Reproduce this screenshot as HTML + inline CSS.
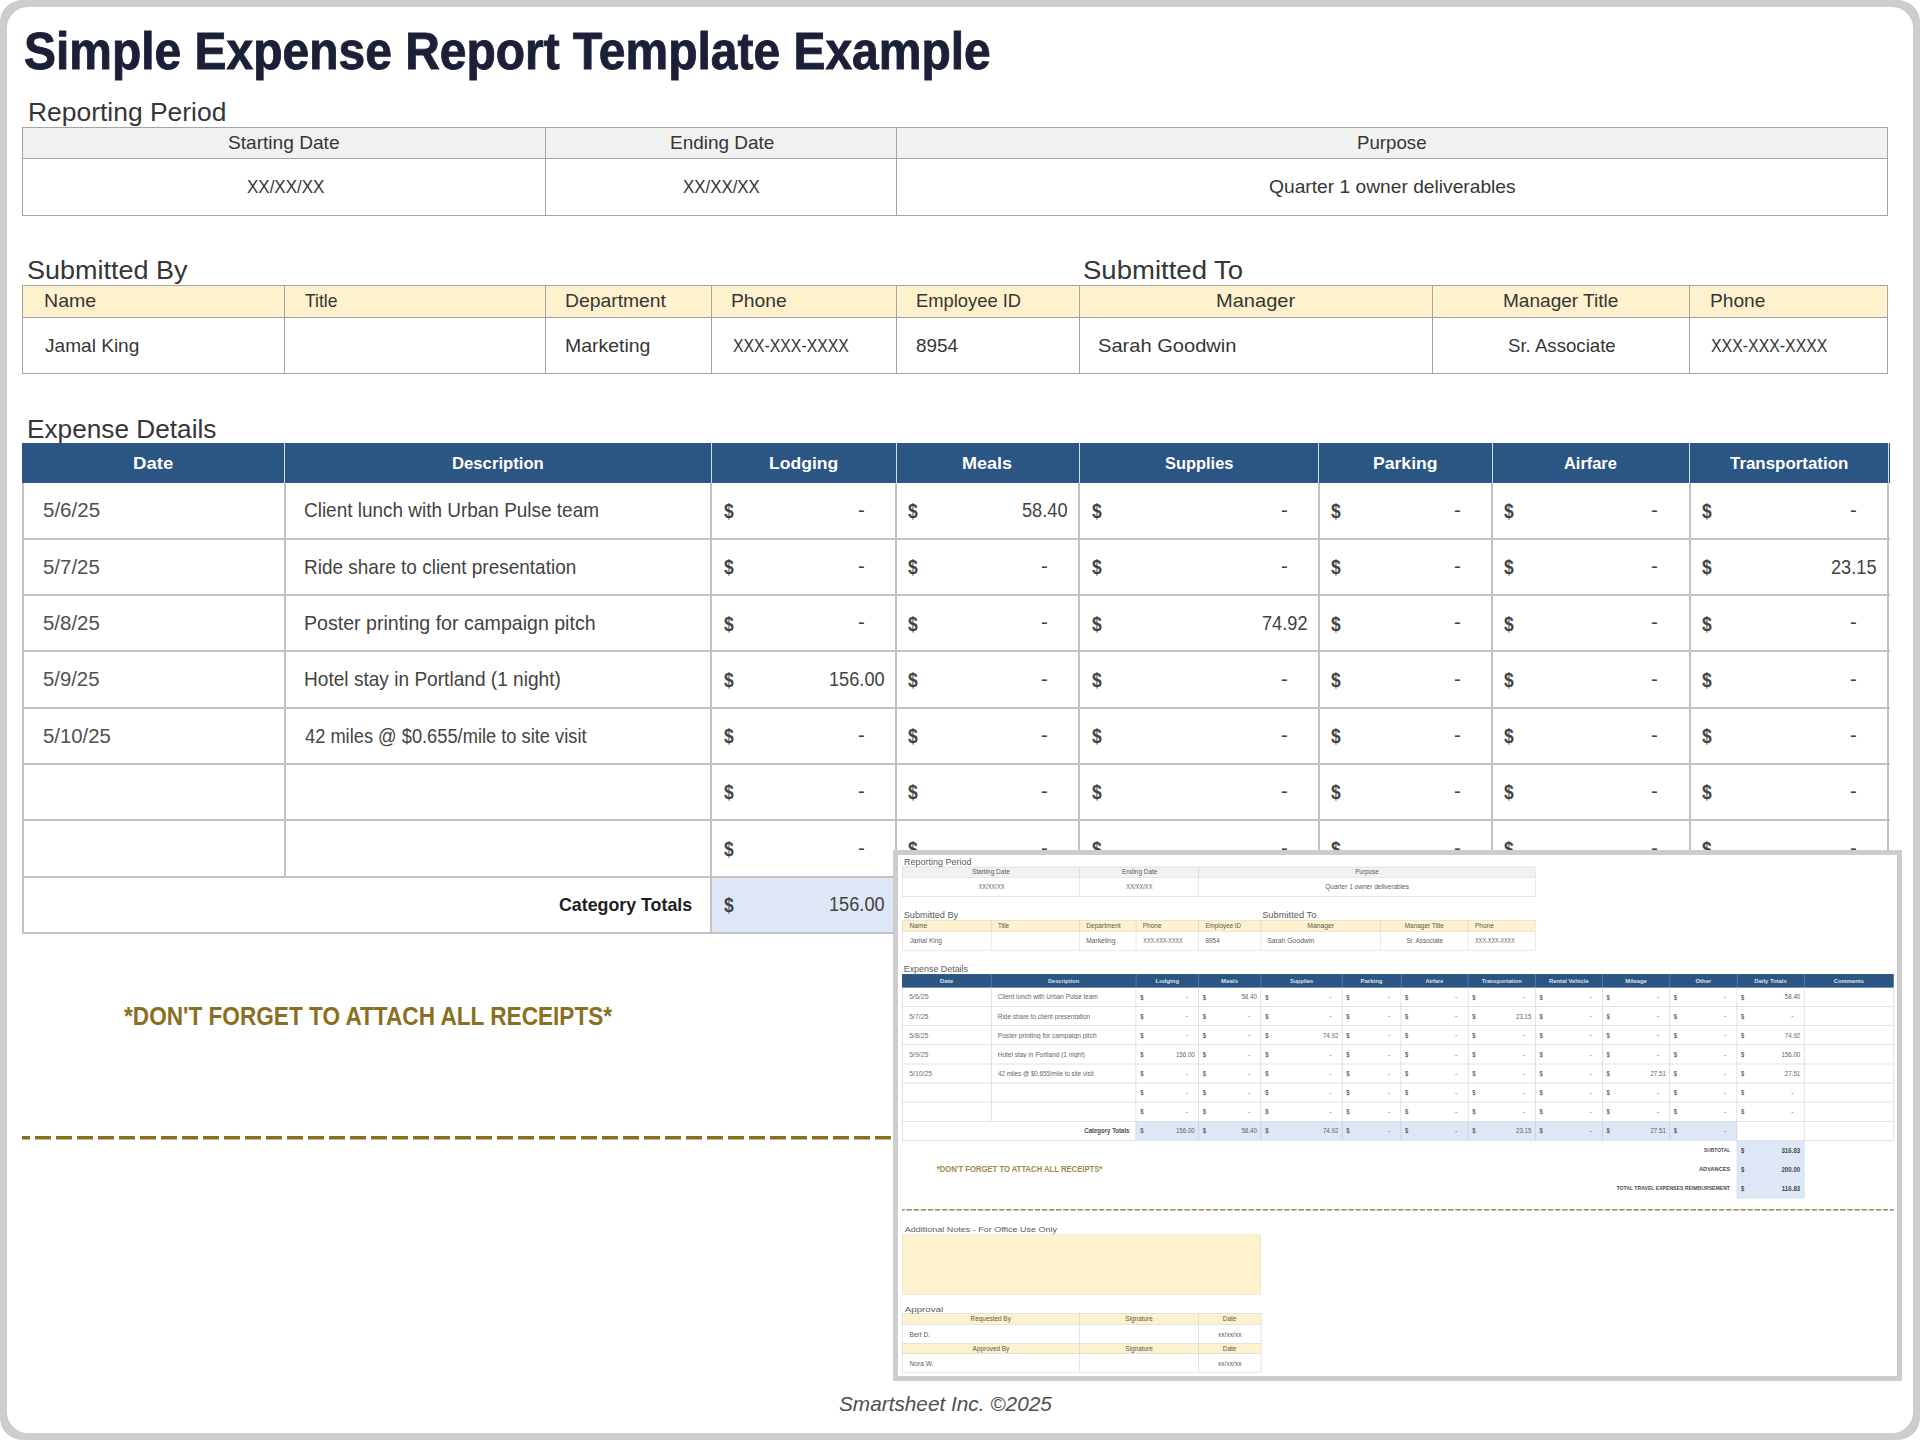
<!DOCTYPE html>
<html><head><meta charset="utf-8"><title>Simple Expense Report Template Example</title><style>
html,body{margin:0;padding:0;background:#fff;}
body{width:1920px;height:1440px;position:relative;overflow:hidden;font-family:"Liberation Sans",sans-serif;}
.frame{position:absolute;left:0;top:0;width:1920px;height:1440px;background:#cdcdcd;border-radius:22px;}
.frame2{position:absolute;left:7px;top:7px;width:1906px;height:1426px;background:#fff;border-radius:21px;}
.title{-webkit-text-stroke:0.9px #1b2038;}
.inset .t{opacity:.82;}
.inset .g{opacity:.7;}
.sheet{position:absolute;left:0;top:0;width:3000px;height:1700px;}
.sheet i{position:absolute;display:block;}
.t{position:absolute;white-space:pre;line-height:1;transform-origin:0 0;font-family:"Liberation Sans",sans-serif;}
.mainclip{position:absolute;left:0;top:0;width:1890px;height:1160px;overflow:hidden;}
.inset{position:absolute;left:893px;top:850px;width:1009px;height:531px;box-sizing:border-box;border:5px solid #cdcdcd;background:#fff;overflow:hidden;}
.inset .sheet{transform:translate(-3.44px,-31.3px) scale(0.3394);transform-origin:0 0;}
</style></head><body>
<div class="frame"></div><div class="frame2"></div>
<span class="t title" style="left:24.08px;top:25px;font-size:52.035px;font-weight:bold;color:#1b2038;transform:scaleX(0.9221);">Simple Expense Report Template Example</span><span class=t style="left:839.29px;top:1394px;font-size:20.640px;font-style:italic;color:#505050;transform:scaleX(1.0076);">Smartsheet Inc. ©2025</span>
<div class="mainclip"><div class="sheet"><i style='left:22px;top:127px;width:1865px;height:31px;background:#f1f1f1'></i><i class=g style='left:22px;top:127px;width:1866px;height:1px;background:#a4a4a4'></i><i class=g style='left:22px;top:158px;width:1866px;height:1px;background:#a4a4a4'></i><i class=g style='left:22px;top:215px;width:1866px;height:1px;background:#a4a4a4'></i><i class=g style='left:22px;top:127px;width:1px;height:89px;background:#a4a4a4'></i><i class=g style='left:545px;top:127px;width:1px;height:89px;background:#a4a4a4'></i><i class=g style='left:896px;top:127px;width:1px;height:89px;background:#a4a4a4'></i><i class=g style='left:1887px;top:127px;width:1px;height:89px;background:#a4a4a4'></i><i style='left:22px;top:285px;width:1865px;height:32px;background:#fef1cd'></i><i class=g style='left:22px;top:285px;width:1866px;height:1px;background:#a4a4a4'></i><i class=g style='left:22px;top:317px;width:1866px;height:1px;background:#a4a4a4'></i><i class=g style='left:22px;top:373px;width:1866px;height:1px;background:#a4a4a4'></i><i class=g style='left:22px;top:285px;width:1px;height:89px;background:#a4a4a4'></i><i class=g style='left:284px;top:285px;width:1px;height:89px;background:#a4a4a4'></i><i class=g style='left:545px;top:285px;width:1px;height:89px;background:#a4a4a4'></i><i class=g style='left:711px;top:285px;width:1px;height:89px;background:#a4a4a4'></i><i class=g style='left:896px;top:285px;width:1px;height:89px;background:#a4a4a4'></i><i class=g style='left:1079px;top:285px;width:1px;height:89px;background:#a4a4a4'></i><i class=g style='left:1432px;top:285px;width:1px;height:89px;background:#a4a4a4'></i><i class=g style='left:1689px;top:285px;width:1px;height:89px;background:#a4a4a4'></i><i class=g style='left:1887px;top:285px;width:1px;height:89px;background:#a4a4a4'></i><i style='left:22px;top:443px;width:1868px;height:40px;background:#2b5582'></i><i style='left:1890px;top:443px;width:1054px;height:40px;background:#2b5582'></i><i class=g style='left:284px;top:443px;width:1px;height:40px;background:#d5dde8'></i><i class=g style='left:711px;top:443px;width:1px;height:40px;background:#d5dde8'></i><i class=g style='left:896px;top:443px;width:1px;height:40px;background:#d5dde8'></i><i class=g style='left:1079px;top:443px;width:1px;height:40px;background:#d5dde8'></i><i class=g style='left:1318px;top:443px;width:1px;height:40px;background:#d5dde8'></i><i class=g style='left:1492px;top:443px;width:1px;height:40px;background:#d5dde8'></i><i class=g style='left:1689px;top:443px;width:1px;height:40px;background:#d5dde8'></i><i class=g style='left:1888px;top:443px;width:1px;height:40px;background:#d5dde8'></i><i class=g style='left:2086px;top:443px;width:1px;height:40px;background:#d5dde8'></i><i class=g style='left:2284px;top:443px;width:1px;height:40px;background:#d5dde8'></i><i class=g style='left:2482px;top:443px;width:1px;height:40px;background:#d5dde8'></i><i class=g style='left:2680px;top:443px;width:1px;height:40px;background:#d5dde8'></i><i style='left:711px;top:878px;width:1771px;height:54px;background:#dde7f5'></i><i class=g style='left:22px;top:538px;width:2922px;height:2px;background:#c2c2c2'></i><i class=g style='left:22px;top:594px;width:2922px;height:2px;background:#c2c2c2'></i><i class=g style='left:22px;top:650px;width:2922px;height:2px;background:#c2c2c2'></i><i class=g style='left:22px;top:707px;width:2922px;height:2px;background:#c2c2c2'></i><i class=g style='left:22px;top:763px;width:2922px;height:2px;background:#c2c2c2'></i><i class=g style='left:22px;top:819px;width:2922px;height:2px;background:#c2c2c2'></i><i class=g style='left:22px;top:876px;width:2922px;height:2px;background:#c2c2c2'></i><i class=g style='left:22px;top:932px;width:2922px;height:2px;background:#c2c2c2'></i><i class=g style='left:22px;top:483px;width:2px;height:451px;background:#c2c2c2'></i><i class=g style='left:284px;top:483px;width:2px;height:393px;background:#c2c2c2'></i><i class=g style='left:710px;top:483px;width:2px;height:451px;background:#c2c2c2'></i><i class=g style='left:895px;top:483px;width:2px;height:451px;background:#c2c2c2'></i><i class=g style='left:1078px;top:483px;width:2px;height:451px;background:#c2c2c2'></i><i class=g style='left:1318px;top:483px;width:2px;height:451px;background:#c2c2c2'></i><i class=g style='left:1491px;top:483px;width:2px;height:451px;background:#c2c2c2'></i><i class=g style='left:1689px;top:483px;width:2px;height:451px;background:#c2c2c2'></i><i class=g style='left:1887px;top:483px;width:2px;height:451px;background:#c2c2c2'></i><i class=g style='left:2085px;top:483px;width:2px;height:451px;background:#c2c2c2'></i><i class=g style='left:2283px;top:483px;width:2px;height:451px;background:#c2c2c2'></i><i class=g style='left:2481px;top:483px;width:2px;height:451px;background:#c2c2c2'></i><i class=g style='left:2679px;top:483px;width:2px;height:451px;background:#c2c2c2'></i><i class=g style='left:2943px;top:483px;width:2px;height:451px;background:#c2c2c2'></i><i style='left:2482px;top:934px;width:198px;height:56.3px;background:#dde7f5'></i><i class=g style='left:2482px;top:989px;width:198px;height:2px;background:#c9d5e6'></i><i style='left:2482px;top:990.3px;width:198px;height:56.3px;background:#dde7f5'></i><i class=g style='left:2482px;top:1046px;width:198px;height:2px;background:#c9d5e6'></i><i style='left:2482px;top:1046.6px;width:198px;height:56.3px;background:#dde7f5'></i><i class=g style='left:2482px;top:1102px;width:198px;height:2px;background:#c9d5e6'></i><i class=g style='left:2481px;top:934px;width:2px;height:169px;background:#c9d5e6'></i><i class=g style='left:2679px;top:934px;width:2px;height:169px;background:#c9d5e6'></i><i style='left:22px;top:1209.5px;width:1057.5px;height:177.3px;background:#fef1cd'></i><i class=g style='left:22px;top:1209px;width:1057.5px;height:2px;background:#e3dcc8'></i><i class=g style='left:22px;top:1386px;width:1057.5px;height:2px;background:#e3dcc8'></i><i class=g style='left:22px;top:1209.5px;width:2px;height:177.3px;background:#e3dcc8'></i><i class=g style='left:1078px;top:1209.5px;width:2px;height:177.3px;background:#e3dcc8'></i><i style='left:22px;top:1443.4px;width:1057.5px;height:31.6px;background:#fef1cd'></i><i style='left:22px;top:1531.8px;width:1057.5px;height:29.2px;background:#fef1cd'></i><i class=g style='left:22px;top:1442.4px;width:1057.5px;height:2px;background:#c8c8c8'></i><i class=g style='left:22px;top:1474px;width:1057.5px;height:2px;background:#c8c8c8'></i><i class=g style='left:22px;top:1530.8px;width:1057.5px;height:2px;background:#c8c8c8'></i><i class=g style='left:22px;top:1560px;width:1057.5px;height:2px;background:#c8c8c8'></i><i class=g style='left:22px;top:1614.5px;width:1057.5px;height:2px;background:#c8c8c8'></i><i class=g style='left:21px;top:1443.4px;width:2px;height:172.1px;background:#c8c8c8'></i><i class=g style='left:544.2px;top:1443.4px;width:2px;height:172.1px;background:#c8c8c8'></i><i class=g style='left:895px;top:1443.4px;width:2px;height:172.1px;background:#c8c8c8'></i><i class=g style='left:1078.5px;top:1443.4px;width:2px;height:172.1px;background:#c8c8c8'></i><span class=t style="left:27.63px;top:100px;font-size:25.581px;color:#363636;transform:scaleX(1.0333);">Reporting Period</span><span class=t style="left:26.95px;top:258px;font-size:25.581px;color:#363636;transform:scaleX(1.0550);">Submitted By</span><span class=t style="left:1082.72px;top:258px;font-size:25.581px;color:#363636;transform:scaleX(1.0762);">Submitted To</span><span class=t style="left:26.70px;top:417px;font-size:25.581px;color:#363636;transform:scaleX(1.0247);">Expense Details</span><span class=t style="left:29.60px;top:1186px;font-size:20.465px;color:#363636;transform:scaleX(1.2948);">Additional Notes - For Office Use Only</span><span class=t style="left:29.60px;top:1419px;font-size:23.535px;color:#363636;transform:scaleX(1.2174);">Approval</span><span class=t style="left:227.97px;top:134px;font-size:18.605px;color:#363636;transform:scaleX(1.0280);">Starting Date</span><span class=t style="left:669.68px;top:134px;font-size:18.605px;color:#363636;transform:scaleX(1.0198);">Ending Date</span><span class=t style="left:1356.65px;top:134px;font-size:18.605px;color:#363636;transform:scaleX(1.0044);">Purpose</span><span class=t style="left:247.00px;top:177px;font-size:19.186px;color:#363636;transform:scaleX(0.8851);">XX/XX/XX</span><span class=t style="left:682.75px;top:177px;font-size:19.186px;color:#363636;transform:scaleX(0.8793);">XX/XX/XX</span><span class=t style="left:1268.75px;top:177px;font-size:19.186px;color:#363636;transform:scaleX(1.0020);">Quarter 1 owner deliverables</span><span class=t style="left:43.75px;top:292px;font-size:18.605px;color:#363636;transform:scaleX(1.0521);">Name</span><span class=t style="left:305.10px;top:292px;font-size:18.605px;color:#363636;transform:scaleX(0.9412);">Title</span><span class=t style="left:565.16px;top:292px;font-size:18.605px;color:#363636;transform:scaleX(1.0396);">Department</span><span class=t style="left:731.46px;top:292px;font-size:18.605px;color:#363636;transform:scaleX(1.0365);">Phone</span><span class=t style="left:916.01px;top:292px;font-size:18.605px;color:#363636;transform:scaleX(0.9867);">Employee ID</span><span class=t style="left:1215.87px;top:292px;font-size:18.605px;color:#363636;transform:scaleX(1.0781);">Manager</span><span class=t style="left:1503.43px;top:292px;font-size:18.605px;color:#363636;transform:scaleX(1.0243);">Manager Title</span><span class=t style="left:1709.67px;top:292px;font-size:18.605px;color:#363636;transform:scaleX(1.0308);">Phone</span><span class=t style="left:44.80px;top:336px;font-size:19.186px;color:#363636;transform:scaleX(0.9947);">Jamal King</span><span class=t style="left:565.19px;top:336px;font-size:19.186px;color:#363636;transform:scaleX(1.0146);">Marketing</span><span class=t style="left:732.50px;top:336px;font-size:19.186px;color:#363636;transform:scaleX(0.8229);">XXX-XXX-XXXX</span><span class=t style="left:916.01px;top:336px;font-size:19.186px;color:#363636;transform:scaleX(0.9857);">8954</span><span class=t style="left:1098.35px;top:336px;font-size:19.186px;color:#363636;transform:scaleX(1.0477);">Sarah Goodwin</span><span class=t style="left:1507.78px;top:336px;font-size:19.186px;color:#363636;transform:scaleX(0.9716);">Sr. Associate</span><span class=t style="left:1710.70px;top:336px;font-size:19.186px;color:#363636;transform:scaleX(0.8279);">XXX-XXX-XXXX</span><span class=t style="left:133.01px;top:455px;font-size:17.006px;font-weight:bold;color:#ffffff;transform:scaleX(1.0917);">Date</span><span class=t style="left:451.97px;top:455px;font-size:17.006px;font-weight:bold;color:#ffffff;transform:scaleX(0.9815);">Description</span><span class=t style="left:769.17px;top:455px;font-size:17.006px;font-weight:bold;color:#ffffff;transform:scaleX(1.0323);">Lodging</span><span class=t style="left:962.34px;top:455px;font-size:17.006px;font-weight:bold;color:#ffffff;transform:scaleX(1.0587);">Meals</span><span class=t style="left:1164.95px;top:455px;font-size:17.006px;font-weight:bold;color:#ffffff;transform:scaleX(0.9662);">Supplies</span><span class=t style="left:1373.02px;top:455px;font-size:17.006px;font-weight:bold;color:#ffffff;transform:scaleX(1.0344);">Parking</span><span class=t style="left:1564.40px;top:455px;font-size:17.006px;font-weight:bold;color:#ffffff;transform:scaleX(0.9636);">Airfare</span><span class=t style="left:1730.15px;top:455px;font-size:17.006px;font-weight:bold;color:#ffffff;transform:scaleX(0.9941);">Transportation</span><span class=t style="left:1928.11px;top:455px;font-size:17.006px;font-weight:bold;color:#ffffff;transform:scaleX(1.0153);">Rental Vehicle</span><span class=t style="left:2153.02px;top:455px;font-size:17.006px;font-weight:bold;color:#ffffff;transform:scaleX(1.0153);">Mileage</span><span class=t style="left:2359.65px;top:455px;font-size:17.006px;font-weight:bold;color:#ffffff;transform:scaleX(1.0153);">Other</span><span class=t style="left:2532.77px;top:455px;font-size:17.006px;font-weight:bold;color:#ffffff;transform:scaleX(1.0153);">Daily Totals</span><span class=t style="left:2767.33px;top:455px;font-size:17.006px;font-weight:bold;color:#ffffff;transform:scaleX(1.0153);">Comments</span><span class=t style="left:43.38px;top:500px;font-size:20.058px;color:#505050;transform:scaleX(1.0241);">5/6/25</span><span class=t style="left:304.05px;top:500px;font-size:20.058px;color:#434343;transform:scaleX(0.9455);">Client lunch with Urban Pulse team</span><span class=t style="left:723.50px;top:501px;font-size:20.058px;font-weight:bold;color:#434343;transform:scaleX(0.8727);">$</span><span class=t style="left:857.88px;top:500px;font-size:20.058px;color:#434343;transform:scaleX(1.0200);">-</span><span class=t style="left:908.00px;top:501px;font-size:20.058px;font-weight:bold;color:#434343;transform:scaleX(0.8727);">$</span><span class=t style="left:1022.17px;top:500px;font-size:20.058px;color:#434343;transform:scaleX(0.9067);">58.40</span><span class=t style="left:1091.50px;top:501px;font-size:20.058px;font-weight:bold;color:#434343;transform:scaleX(0.8727);">$</span><span class=t style="left:1280.88px;top:500px;font-size:20.058px;color:#434343;transform:scaleX(1.0200);">-</span><span class=t style="left:1331.00px;top:501px;font-size:20.058px;font-weight:bold;color:#434343;transform:scaleX(0.8727);">$</span><span class=t style="left:1454.08px;top:500px;font-size:20.058px;color:#434343;transform:scaleX(1.0200);">-</span><span class=t style="left:1504.20px;top:501px;font-size:20.058px;font-weight:bold;color:#434343;transform:scaleX(0.8727);">$</span><span class=t style="left:1651.48px;top:500px;font-size:20.058px;color:#434343;transform:scaleX(1.0200);">-</span><span class=t style="left:1701.60px;top:501px;font-size:20.058px;font-weight:bold;color:#434343;transform:scaleX(0.8727);">$</span><span class=t style="left:1849.88px;top:500px;font-size:20.058px;color:#434343;transform:scaleX(1.0200);">-</span><span class=t style="left:1900.00px;top:501px;font-size:20.058px;font-weight:bold;color:#434343;transform:scaleX(0.8727);">$</span><span class=t style="left:2047.88px;top:500px;font-size:20.058px;color:#434343;transform:scaleX(1.0200);">-</span><span class=t style="left:2098.00px;top:501px;font-size:20.058px;font-weight:bold;color:#434343;transform:scaleX(0.8727);">$</span><span class=t style="left:2245.88px;top:500px;font-size:20.058px;color:#434343;transform:scaleX(1.0200);">-</span><span class=t style="left:2296.00px;top:501px;font-size:20.058px;font-weight:bold;color:#434343;transform:scaleX(0.8727);">$</span><span class=t style="left:2443.88px;top:500px;font-size:20.058px;color:#434343;transform:scaleX(1.0200);">-</span><span class=t style="left:2494.00px;top:501px;font-size:20.058px;font-weight:bold;color:#434343;transform:scaleX(0.8727);">$</span><span class=t style="left:2622.67px;top:500px;font-size:20.058px;color:#434343;transform:scaleX(0.9067);">58.40</span><span class=t style="left:43.38px;top:557px;font-size:20.058px;color:#505050;transform:scaleX(1.0185);">5/7/25</span><span class=t style="left:304.05px;top:557px;font-size:20.058px;color:#434343;transform:scaleX(0.9469);">Ride share to client presentation</span><span class=t style="left:723.50px;top:557px;font-size:20.058px;font-weight:bold;color:#434343;transform:scaleX(0.8727);">$</span><span class=t style="left:857.88px;top:556px;font-size:20.058px;color:#434343;transform:scaleX(1.0200);">-</span><span class=t style="left:908.00px;top:557px;font-size:20.058px;font-weight:bold;color:#434343;transform:scaleX(0.8727);">$</span><span class=t style="left:1041.38px;top:556px;font-size:20.058px;color:#434343;transform:scaleX(1.0200);">-</span><span class=t style="left:1091.50px;top:557px;font-size:20.058px;font-weight:bold;color:#434343;transform:scaleX(0.8727);">$</span><span class=t style="left:1280.88px;top:556px;font-size:20.058px;color:#434343;transform:scaleX(1.0200);">-</span><span class=t style="left:1331.00px;top:557px;font-size:20.058px;font-weight:bold;color:#434343;transform:scaleX(0.8727);">$</span><span class=t style="left:1454.08px;top:556px;font-size:20.058px;color:#434343;transform:scaleX(1.0200);">-</span><span class=t style="left:1504.20px;top:557px;font-size:20.058px;font-weight:bold;color:#434343;transform:scaleX(0.8727);">$</span><span class=t style="left:1651.48px;top:556px;font-size:20.058px;color:#434343;transform:scaleX(1.0200);">-</span><span class=t style="left:1701.60px;top:557px;font-size:20.058px;font-weight:bold;color:#434343;transform:scaleX(0.8727);">$</span><span class=t style="left:1830.67px;top:557px;font-size:20.058px;color:#434343;transform:scaleX(0.9067);">23.15</span><span class=t style="left:1900.00px;top:557px;font-size:20.058px;font-weight:bold;color:#434343;transform:scaleX(0.8727);">$</span><span class=t style="left:2047.88px;top:556px;font-size:20.058px;color:#434343;transform:scaleX(1.0200);">-</span><span class=t style="left:2098.00px;top:557px;font-size:20.058px;font-weight:bold;color:#434343;transform:scaleX(0.8727);">$</span><span class=t style="left:2245.88px;top:556px;font-size:20.058px;color:#434343;transform:scaleX(1.0200);">-</span><span class=t style="left:2296.00px;top:557px;font-size:20.058px;font-weight:bold;color:#434343;transform:scaleX(0.8727);">$</span><span class=t style="left:2443.88px;top:556px;font-size:20.058px;color:#434343;transform:scaleX(1.0200);">-</span><span class=t style="left:2494.00px;top:557px;font-size:20.058px;font-weight:bold;color:#434343;transform:scaleX(0.8727);">$</span><span class=t style="left:2641.88px;top:556px;font-size:20.058px;color:#434343;transform:scaleX(1.0200);">-</span><span class=t style="left:43.38px;top:613px;font-size:20.058px;color:#505050;transform:scaleX(1.0185);">5/8/25</span><span class=t style="left:304.02px;top:613px;font-size:20.058px;color:#434343;transform:scaleX(0.9764);">Poster printing for campaign pitch</span><span class=t style="left:723.50px;top:614px;font-size:20.058px;font-weight:bold;color:#434343;transform:scaleX(0.8727);">$</span><span class=t style="left:857.88px;top:612px;font-size:20.058px;color:#434343;transform:scaleX(1.0200);">-</span><span class=t style="left:908.00px;top:614px;font-size:20.058px;font-weight:bold;color:#434343;transform:scaleX(0.8727);">$</span><span class=t style="left:1041.38px;top:612px;font-size:20.058px;color:#434343;transform:scaleX(1.0200);">-</span><span class=t style="left:1091.50px;top:614px;font-size:20.058px;font-weight:bold;color:#434343;transform:scaleX(0.8727);">$</span><span class=t style="left:1261.67px;top:613px;font-size:20.058px;color:#434343;transform:scaleX(0.9067);">74.92</span><span class=t style="left:1331.00px;top:614px;font-size:20.058px;font-weight:bold;color:#434343;transform:scaleX(0.8727);">$</span><span class=t style="left:1454.08px;top:612px;font-size:20.058px;color:#434343;transform:scaleX(1.0200);">-</span><span class=t style="left:1504.20px;top:614px;font-size:20.058px;font-weight:bold;color:#434343;transform:scaleX(0.8727);">$</span><span class=t style="left:1651.48px;top:612px;font-size:20.058px;color:#434343;transform:scaleX(1.0200);">-</span><span class=t style="left:1701.60px;top:614px;font-size:20.058px;font-weight:bold;color:#434343;transform:scaleX(0.8727);">$</span><span class=t style="left:1849.88px;top:612px;font-size:20.058px;color:#434343;transform:scaleX(1.0200);">-</span><span class=t style="left:1900.00px;top:614px;font-size:20.058px;font-weight:bold;color:#434343;transform:scaleX(0.8727);">$</span><span class=t style="left:2047.88px;top:612px;font-size:20.058px;color:#434343;transform:scaleX(1.0200);">-</span><span class=t style="left:2098.00px;top:614px;font-size:20.058px;font-weight:bold;color:#434343;transform:scaleX(0.8727);">$</span><span class=t style="left:2245.88px;top:612px;font-size:20.058px;color:#434343;transform:scaleX(1.0200);">-</span><span class=t style="left:2296.00px;top:614px;font-size:20.058px;font-weight:bold;color:#434343;transform:scaleX(0.8727);">$</span><span class=t style="left:2443.88px;top:612px;font-size:20.058px;color:#434343;transform:scaleX(1.0200);">-</span><span class=t style="left:2494.00px;top:614px;font-size:20.058px;font-weight:bold;color:#434343;transform:scaleX(0.8727);">$</span><span class=t style="left:2622.67px;top:613px;font-size:20.058px;color:#434343;transform:scaleX(0.9067);">74.92</span><span class=t style="left:43.39px;top:669px;font-size:20.058px;color:#505050;transform:scaleX(1.0130);">5/9/25</span><span class=t style="left:304.05px;top:669px;font-size:20.058px;color:#434343;transform:scaleX(0.9526);">Hotel stay in Portland (1 night)</span><span class=t style="left:723.50px;top:670px;font-size:20.058px;font-weight:bold;color:#434343;transform:scaleX(0.8727);">$</span><span class=t style="left:828.69px;top:669px;font-size:20.058px;color:#434343;transform:scaleX(0.9067);">156.00</span><span class=t style="left:908.00px;top:670px;font-size:20.058px;font-weight:bold;color:#434343;transform:scaleX(0.8727);">$</span><span class=t style="left:1041.38px;top:669px;font-size:20.058px;color:#434343;transform:scaleX(1.0200);">-</span><span class=t style="left:1091.50px;top:670px;font-size:20.058px;font-weight:bold;color:#434343;transform:scaleX(0.8727);">$</span><span class=t style="left:1280.88px;top:669px;font-size:20.058px;color:#434343;transform:scaleX(1.0200);">-</span><span class=t style="left:1331.00px;top:670px;font-size:20.058px;font-weight:bold;color:#434343;transform:scaleX(0.8727);">$</span><span class=t style="left:1454.08px;top:669px;font-size:20.058px;color:#434343;transform:scaleX(1.0200);">-</span><span class=t style="left:1504.20px;top:670px;font-size:20.058px;font-weight:bold;color:#434343;transform:scaleX(0.8727);">$</span><span class=t style="left:1651.48px;top:669px;font-size:20.058px;color:#434343;transform:scaleX(1.0200);">-</span><span class=t style="left:1701.60px;top:670px;font-size:20.058px;font-weight:bold;color:#434343;transform:scaleX(0.8727);">$</span><span class=t style="left:1849.88px;top:669px;font-size:20.058px;color:#434343;transform:scaleX(1.0200);">-</span><span class=t style="left:1900.00px;top:670px;font-size:20.058px;font-weight:bold;color:#434343;transform:scaleX(0.8727);">$</span><span class=t style="left:2047.88px;top:669px;font-size:20.058px;color:#434343;transform:scaleX(1.0200);">-</span><span class=t style="left:2098.00px;top:670px;font-size:20.058px;font-weight:bold;color:#434343;transform:scaleX(0.8727);">$</span><span class=t style="left:2245.88px;top:669px;font-size:20.058px;color:#434343;transform:scaleX(1.0200);">-</span><span class=t style="left:2296.00px;top:670px;font-size:20.058px;font-weight:bold;color:#434343;transform:scaleX(0.8727);">$</span><span class=t style="left:2443.88px;top:669px;font-size:20.058px;color:#434343;transform:scaleX(1.0200);">-</span><span class=t style="left:2494.00px;top:670px;font-size:20.058px;font-weight:bold;color:#434343;transform:scaleX(0.8727);">$</span><span class=t style="left:2612.69px;top:669px;font-size:20.058px;color:#434343;transform:scaleX(0.9067);">156.00</span><span class=t style="left:43.39px;top:726px;font-size:20.058px;color:#505050;transform:scaleX(1.0123);">5/10/25</span><span class=t style="left:305.00px;top:726px;font-size:20.058px;color:#434343;transform:scaleX(0.9113);">42 miles @ $0.655/mile to site visit</span><span class=t style="left:723.50px;top:726px;font-size:20.058px;font-weight:bold;color:#434343;transform:scaleX(0.8727);">$</span><span class=t style="left:857.88px;top:725px;font-size:20.058px;color:#434343;transform:scaleX(1.0200);">-</span><span class=t style="left:908.00px;top:726px;font-size:20.058px;font-weight:bold;color:#434343;transform:scaleX(0.8727);">$</span><span class=t style="left:1041.38px;top:725px;font-size:20.058px;color:#434343;transform:scaleX(1.0200);">-</span><span class=t style="left:1091.50px;top:726px;font-size:20.058px;font-weight:bold;color:#434343;transform:scaleX(0.8727);">$</span><span class=t style="left:1280.88px;top:725px;font-size:20.058px;color:#434343;transform:scaleX(1.0200);">-</span><span class=t style="left:1331.00px;top:726px;font-size:20.058px;font-weight:bold;color:#434343;transform:scaleX(0.8727);">$</span><span class=t style="left:1454.08px;top:725px;font-size:20.058px;color:#434343;transform:scaleX(1.0200);">-</span><span class=t style="left:1504.20px;top:726px;font-size:20.058px;font-weight:bold;color:#434343;transform:scaleX(0.8727);">$</span><span class=t style="left:1651.48px;top:725px;font-size:20.058px;color:#434343;transform:scaleX(1.0200);">-</span><span class=t style="left:1701.60px;top:726px;font-size:20.058px;font-weight:bold;color:#434343;transform:scaleX(0.8727);">$</span><span class=t style="left:1849.88px;top:725px;font-size:20.058px;color:#434343;transform:scaleX(1.0200);">-</span><span class=t style="left:1900.00px;top:726px;font-size:20.058px;font-weight:bold;color:#434343;transform:scaleX(0.8727);">$</span><span class=t style="left:2047.88px;top:725px;font-size:20.058px;color:#434343;transform:scaleX(1.0200);">-</span><span class=t style="left:2098.00px;top:726px;font-size:20.058px;font-weight:bold;color:#434343;transform:scaleX(0.8727);">$</span><span class=t style="left:2226.67px;top:726px;font-size:20.058px;color:#434343;transform:scaleX(0.9067);">27.51</span><span class=t style="left:2296.00px;top:726px;font-size:20.058px;font-weight:bold;color:#434343;transform:scaleX(0.8727);">$</span><span class=t style="left:2443.88px;top:725px;font-size:20.058px;color:#434343;transform:scaleX(1.0200);">-</span><span class=t style="left:2494.00px;top:726px;font-size:20.058px;font-weight:bold;color:#434343;transform:scaleX(0.8727);">$</span><span class=t style="left:2622.67px;top:726px;font-size:20.058px;color:#434343;transform:scaleX(0.9067);">27.51</span><span class=t style="left:723.50px;top:782px;font-size:20.058px;font-weight:bold;color:#434343;transform:scaleX(0.8727);">$</span><span class=t style="left:857.88px;top:781px;font-size:20.058px;color:#434343;transform:scaleX(1.0200);">-</span><span class=t style="left:908.00px;top:782px;font-size:20.058px;font-weight:bold;color:#434343;transform:scaleX(0.8727);">$</span><span class=t style="left:1041.38px;top:781px;font-size:20.058px;color:#434343;transform:scaleX(1.0200);">-</span><span class=t style="left:1091.50px;top:782px;font-size:20.058px;font-weight:bold;color:#434343;transform:scaleX(0.8727);">$</span><span class=t style="left:1280.88px;top:781px;font-size:20.058px;color:#434343;transform:scaleX(1.0200);">-</span><span class=t style="left:1331.00px;top:782px;font-size:20.058px;font-weight:bold;color:#434343;transform:scaleX(0.8727);">$</span><span class=t style="left:1454.08px;top:781px;font-size:20.058px;color:#434343;transform:scaleX(1.0200);">-</span><span class=t style="left:1504.20px;top:782px;font-size:20.058px;font-weight:bold;color:#434343;transform:scaleX(0.8727);">$</span><span class=t style="left:1651.48px;top:781px;font-size:20.058px;color:#434343;transform:scaleX(1.0200);">-</span><span class=t style="left:1701.60px;top:782px;font-size:20.058px;font-weight:bold;color:#434343;transform:scaleX(0.8727);">$</span><span class=t style="left:1849.88px;top:781px;font-size:20.058px;color:#434343;transform:scaleX(1.0200);">-</span><span class=t style="left:1900.00px;top:782px;font-size:20.058px;font-weight:bold;color:#434343;transform:scaleX(0.8727);">$</span><span class=t style="left:2047.88px;top:781px;font-size:20.058px;color:#434343;transform:scaleX(1.0200);">-</span><span class=t style="left:2098.00px;top:782px;font-size:20.058px;font-weight:bold;color:#434343;transform:scaleX(0.8727);">$</span><span class=t style="left:2245.88px;top:781px;font-size:20.058px;color:#434343;transform:scaleX(1.0200);">-</span><span class=t style="left:2296.00px;top:782px;font-size:20.058px;font-weight:bold;color:#434343;transform:scaleX(0.8727);">$</span><span class=t style="left:2443.88px;top:781px;font-size:20.058px;color:#434343;transform:scaleX(1.0200);">-</span><span class=t style="left:2494.00px;top:782px;font-size:20.058px;font-weight:bold;color:#434343;transform:scaleX(0.8727);">$</span><span class=t style="left:2641.88px;top:781px;font-size:20.058px;color:#434343;transform:scaleX(1.0200);">-</span><span class=t style="left:723.50px;top:839px;font-size:20.058px;font-weight:bold;color:#434343;transform:scaleX(0.8727);">$</span><span class=t style="left:857.88px;top:838px;font-size:20.058px;color:#434343;transform:scaleX(1.0200);">-</span><span class=t style="left:908.00px;top:839px;font-size:20.058px;font-weight:bold;color:#434343;transform:scaleX(0.8727);">$</span><span class=t style="left:1041.38px;top:838px;font-size:20.058px;color:#434343;transform:scaleX(1.0200);">-</span><span class=t style="left:1091.50px;top:839px;font-size:20.058px;font-weight:bold;color:#434343;transform:scaleX(0.8727);">$</span><span class=t style="left:1280.88px;top:838px;font-size:20.058px;color:#434343;transform:scaleX(1.0200);">-</span><span class=t style="left:1331.00px;top:839px;font-size:20.058px;font-weight:bold;color:#434343;transform:scaleX(0.8727);">$</span><span class=t style="left:1454.08px;top:838px;font-size:20.058px;color:#434343;transform:scaleX(1.0200);">-</span><span class=t style="left:1504.20px;top:839px;font-size:20.058px;font-weight:bold;color:#434343;transform:scaleX(0.8727);">$</span><span class=t style="left:1651.48px;top:838px;font-size:20.058px;color:#434343;transform:scaleX(1.0200);">-</span><span class=t style="left:1701.60px;top:839px;font-size:20.058px;font-weight:bold;color:#434343;transform:scaleX(0.8727);">$</span><span class=t style="left:1849.88px;top:838px;font-size:20.058px;color:#434343;transform:scaleX(1.0200);">-</span><span class=t style="left:1900.00px;top:839px;font-size:20.058px;font-weight:bold;color:#434343;transform:scaleX(0.8727);">$</span><span class=t style="left:2047.88px;top:838px;font-size:20.058px;color:#434343;transform:scaleX(1.0200);">-</span><span class=t style="left:2098.00px;top:839px;font-size:20.058px;font-weight:bold;color:#434343;transform:scaleX(0.8727);">$</span><span class=t style="left:2245.88px;top:838px;font-size:20.058px;color:#434343;transform:scaleX(1.0200);">-</span><span class=t style="left:2296.00px;top:839px;font-size:20.058px;font-weight:bold;color:#434343;transform:scaleX(0.8727);">$</span><span class=t style="left:2443.88px;top:838px;font-size:20.058px;color:#434343;transform:scaleX(1.0200);">-</span><span class=t style="left:2494.00px;top:839px;font-size:20.058px;font-weight:bold;color:#434343;transform:scaleX(0.8727);">$</span><span class=t style="left:2641.88px;top:838px;font-size:20.058px;color:#434343;transform:scaleX(1.0200);">-</span><span class=t style="left:558.50px;top:896px;font-size:18.605px;font-weight:bold;color:#1e1e1e;transform:scaleX(0.9568);">Category Totals</span><span class=t style="left:723.50px;top:895px;font-size:20.058px;font-weight:bold;color:#434343;transform:scaleX(0.8727);">$</span><span class=t style="left:828.69px;top:894px;font-size:20.058px;color:#434343;transform:scaleX(0.9067);">156.00</span><span class=t style="left:908.00px;top:895px;font-size:20.058px;font-weight:bold;color:#434343;transform:scaleX(0.8727);">$</span><span class=t style="left:1022.17px;top:894px;font-size:20.058px;color:#434343;transform:scaleX(0.9067);">58.40</span><span class=t style="left:1091.50px;top:895px;font-size:20.058px;font-weight:bold;color:#434343;transform:scaleX(0.8727);">$</span><span class=t style="left:1261.67px;top:894px;font-size:20.058px;color:#434343;transform:scaleX(0.9067);">74.92</span><span class=t style="left:1331.00px;top:895px;font-size:20.058px;font-weight:bold;color:#434343;transform:scaleX(0.8727);">$</span><span class=t style="left:1454.08px;top:894px;font-size:20.058px;color:#434343;transform:scaleX(1.0200);">-</span><span class=t style="left:1504.20px;top:895px;font-size:20.058px;font-weight:bold;color:#434343;transform:scaleX(0.8727);">$</span><span class=t style="left:1651.48px;top:894px;font-size:20.058px;color:#434343;transform:scaleX(1.0200);">-</span><span class=t style="left:1701.60px;top:895px;font-size:20.058px;font-weight:bold;color:#434343;transform:scaleX(0.8727);">$</span><span class=t style="left:1830.67px;top:894px;font-size:20.058px;color:#434343;transform:scaleX(0.9067);">23.15</span><span class=t style="left:1900.00px;top:895px;font-size:20.058px;font-weight:bold;color:#434343;transform:scaleX(0.8727);">$</span><span class=t style="left:2047.88px;top:894px;font-size:20.058px;color:#434343;transform:scaleX(1.0200);">-</span><span class=t style="left:2098.00px;top:895px;font-size:20.058px;font-weight:bold;color:#434343;transform:scaleX(0.8727);">$</span><span class=t style="left:2226.67px;top:894px;font-size:20.058px;color:#434343;transform:scaleX(0.9067);">27.51</span><span class=t style="left:2296.00px;top:895px;font-size:20.058px;font-weight:bold;color:#434343;transform:scaleX(0.8727);">$</span><span class=t style="left:2443.88px;top:894px;font-size:20.058px;color:#434343;transform:scaleX(1.0200);">-</span><span class=t style="left:2384.70px;top:954px;font-size:15.262px;font-weight:bold;color:#1e1e1e;transform:scaleX(0.9427);">SUBTOTAL</span><span class=t style="left:2494.00px;top:952px;font-size:20.058px;font-weight:bold;color:#1e1e1e;transform:scaleX(0.8727);">$</span><span class=t style="left:2612.69px;top:952px;font-size:20.058px;font-weight:bold;color:#1e1e1e;transform:scaleX(0.9067);">316.83</span><span class=t style="left:2370.00px;top:1011px;font-size:15.262px;font-weight:bold;color:#1e1e1e;transform:scaleX(1.0952);">ADVANCES</span><span class=t style="left:2494.00px;top:1008px;font-size:20.058px;font-weight:bold;color:#1e1e1e;transform:scaleX(0.8727);">$</span><span class=t style="left:2612.69px;top:1008px;font-size:20.058px;font-weight:bold;color:#1e1e1e;transform:scaleX(0.9067);">200.00</span><span class=t style="left:2127.00px;top:1067px;font-size:15.262px;font-weight:bold;color:#1e1e1e;transform:scaleX(0.9882);">TOTAL TRAVEL EXPENSES REIMBURSEMENT</span><span class=t style="left:2494.00px;top:1065px;font-size:20.058px;font-weight:bold;color:#1e1e1e;transform:scaleX(0.8727);">$</span><span class=t style="left:2613.60px;top:1064px;font-size:20.058px;font-weight:bold;color:#1e1e1e;transform:scaleX(0.9067);">116.83</span><span class=t style="left:123.50px;top:1004px;font-size:25.581px;font-weight:bold;color:#8a6f22;transform:scaleX(0.8839);">*DON'T FORGET TO ATTACH ALL RECEIPTS*</span><span class=t style="left:224.10px;top:1450px;font-size:18.605px;color:#363636;transform:scaleX(1.0153);">Requested By</span><span class=t style="left:679.99px;top:1450px;font-size:18.605px;color:#363636;transform:scaleX(1.0153);">Signature</span><span class=t style="left:967.39px;top:1450px;font-size:18.605px;color:#363636;transform:scaleX(1.0153);">Date</span><span class=t style="left:43.78px;top:1495px;font-size:19.186px;color:#363636;transform:scaleX(1.0153);">Bert D.</span><span class=t style="left:953.18px;top:1495px;font-size:19.186px;color:#363636;transform:scaleX(1.0153);">xx/xx/xx</span><span class=t style="left:229.68px;top:1539px;font-size:18.605px;color:#363636;transform:scaleX(1.0153);">Approved By</span><span class=t style="left:679.99px;top:1539px;font-size:18.605px;color:#363636;transform:scaleX(1.0153);">Signature</span><span class=t style="left:967.39px;top:1539px;font-size:18.605px;color:#363636;transform:scaleX(1.0153);">Date</span><span class=t style="left:43.78px;top:1581px;font-size:19.186px;color:#363636;transform:scaleX(1.0153);">Nora W.</span><span class=t style="left:953.18px;top:1581px;font-size:19.186px;color:#363636;transform:scaleX(1.0153);">xx/xx/xx</span><svg style='position:absolute;left:0;top:0' width='2950' height='1200'><line x1='22' y1='1137.8' x2='2944' y2='1137.8' stroke='#8a6f22' stroke-width='3.6' stroke-dasharray='16 5' stroke-dashoffset='8'/></svg></div></div>
<div class="inset"><div class="sheet"><i style='left:22px;top:127px;width:1865px;height:31px;background:#f1f1f1'></i><i class=g style='left:22px;top:127px;width:1866px;height:1px;background:#a4a4a4'></i><i class=g style='left:22px;top:158px;width:1866px;height:1px;background:#a4a4a4'></i><i class=g style='left:22px;top:215px;width:1866px;height:1px;background:#a4a4a4'></i><i class=g style='left:22px;top:127px;width:1px;height:89px;background:#a4a4a4'></i><i class=g style='left:545px;top:127px;width:1px;height:89px;background:#a4a4a4'></i><i class=g style='left:896px;top:127px;width:1px;height:89px;background:#a4a4a4'></i><i class=g style='left:1887px;top:127px;width:1px;height:89px;background:#a4a4a4'></i><i style='left:22px;top:285px;width:1865px;height:32px;background:#fef1cd'></i><i class=g style='left:22px;top:285px;width:1866px;height:1px;background:#a4a4a4'></i><i class=g style='left:22px;top:317px;width:1866px;height:1px;background:#a4a4a4'></i><i class=g style='left:22px;top:373px;width:1866px;height:1px;background:#a4a4a4'></i><i class=g style='left:22px;top:285px;width:1px;height:89px;background:#a4a4a4'></i><i class=g style='left:284px;top:285px;width:1px;height:89px;background:#a4a4a4'></i><i class=g style='left:545px;top:285px;width:1px;height:89px;background:#a4a4a4'></i><i class=g style='left:711px;top:285px;width:1px;height:89px;background:#a4a4a4'></i><i class=g style='left:896px;top:285px;width:1px;height:89px;background:#a4a4a4'></i><i class=g style='left:1079px;top:285px;width:1px;height:89px;background:#a4a4a4'></i><i class=g style='left:1432px;top:285px;width:1px;height:89px;background:#a4a4a4'></i><i class=g style='left:1689px;top:285px;width:1px;height:89px;background:#a4a4a4'></i><i class=g style='left:1887px;top:285px;width:1px;height:89px;background:#a4a4a4'></i><i style='left:22px;top:443px;width:1868px;height:40px;background:#2b5582'></i><i style='left:1890px;top:443px;width:1054px;height:40px;background:#2b5582'></i><i class=g style='left:284px;top:443px;width:1px;height:40px;background:#d5dde8'></i><i class=g style='left:711px;top:443px;width:1px;height:40px;background:#d5dde8'></i><i class=g style='left:896px;top:443px;width:1px;height:40px;background:#d5dde8'></i><i class=g style='left:1079px;top:443px;width:1px;height:40px;background:#d5dde8'></i><i class=g style='left:1318px;top:443px;width:1px;height:40px;background:#d5dde8'></i><i class=g style='left:1492px;top:443px;width:1px;height:40px;background:#d5dde8'></i><i class=g style='left:1689px;top:443px;width:1px;height:40px;background:#d5dde8'></i><i class=g style='left:1888px;top:443px;width:1px;height:40px;background:#d5dde8'></i><i class=g style='left:2086px;top:443px;width:1px;height:40px;background:#d5dde8'></i><i class=g style='left:2284px;top:443px;width:1px;height:40px;background:#d5dde8'></i><i class=g style='left:2482px;top:443px;width:1px;height:40px;background:#d5dde8'></i><i class=g style='left:2680px;top:443px;width:1px;height:40px;background:#d5dde8'></i><i style='left:711px;top:878px;width:1771px;height:54px;background:#dde7f5'></i><i class=g style='left:22px;top:538px;width:2922px;height:2px;background:#c2c2c2'></i><i class=g style='left:22px;top:594px;width:2922px;height:2px;background:#c2c2c2'></i><i class=g style='left:22px;top:650px;width:2922px;height:2px;background:#c2c2c2'></i><i class=g style='left:22px;top:707px;width:2922px;height:2px;background:#c2c2c2'></i><i class=g style='left:22px;top:763px;width:2922px;height:2px;background:#c2c2c2'></i><i class=g style='left:22px;top:819px;width:2922px;height:2px;background:#c2c2c2'></i><i class=g style='left:22px;top:876px;width:2922px;height:2px;background:#c2c2c2'></i><i class=g style='left:22px;top:932px;width:2922px;height:2px;background:#c2c2c2'></i><i class=g style='left:22px;top:483px;width:2px;height:451px;background:#c2c2c2'></i><i class=g style='left:284px;top:483px;width:2px;height:393px;background:#c2c2c2'></i><i class=g style='left:710px;top:483px;width:2px;height:451px;background:#c2c2c2'></i><i class=g style='left:895px;top:483px;width:2px;height:451px;background:#c2c2c2'></i><i class=g style='left:1078px;top:483px;width:2px;height:451px;background:#c2c2c2'></i><i class=g style='left:1318px;top:483px;width:2px;height:451px;background:#c2c2c2'></i><i class=g style='left:1491px;top:483px;width:2px;height:451px;background:#c2c2c2'></i><i class=g style='left:1689px;top:483px;width:2px;height:451px;background:#c2c2c2'></i><i class=g style='left:1887px;top:483px;width:2px;height:451px;background:#c2c2c2'></i><i class=g style='left:2085px;top:483px;width:2px;height:451px;background:#c2c2c2'></i><i class=g style='left:2283px;top:483px;width:2px;height:451px;background:#c2c2c2'></i><i class=g style='left:2481px;top:483px;width:2px;height:451px;background:#c2c2c2'></i><i class=g style='left:2679px;top:483px;width:2px;height:451px;background:#c2c2c2'></i><i class=g style='left:2943px;top:483px;width:2px;height:451px;background:#c2c2c2'></i><i style='left:2482px;top:934px;width:198px;height:56.3px;background:#dde7f5'></i><i class=g style='left:2482px;top:989px;width:198px;height:2px;background:#c9d5e6'></i><i style='left:2482px;top:990.3px;width:198px;height:56.3px;background:#dde7f5'></i><i class=g style='left:2482px;top:1046px;width:198px;height:2px;background:#c9d5e6'></i><i style='left:2482px;top:1046.6px;width:198px;height:56.3px;background:#dde7f5'></i><i class=g style='left:2482px;top:1102px;width:198px;height:2px;background:#c9d5e6'></i><i class=g style='left:2481px;top:934px;width:2px;height:169px;background:#c9d5e6'></i><i class=g style='left:2679px;top:934px;width:2px;height:169px;background:#c9d5e6'></i><i style='left:22px;top:1209.5px;width:1057.5px;height:177.3px;background:#fef1cd'></i><i class=g style='left:22px;top:1209px;width:1057.5px;height:2px;background:#e3dcc8'></i><i class=g style='left:22px;top:1386px;width:1057.5px;height:2px;background:#e3dcc8'></i><i class=g style='left:22px;top:1209.5px;width:2px;height:177.3px;background:#e3dcc8'></i><i class=g style='left:1078px;top:1209.5px;width:2px;height:177.3px;background:#e3dcc8'></i><i style='left:22px;top:1443.4px;width:1057.5px;height:31.6px;background:#fef1cd'></i><i style='left:22px;top:1531.8px;width:1057.5px;height:29.2px;background:#fef1cd'></i><i class=g style='left:22px;top:1442.4px;width:1057.5px;height:2px;background:#c8c8c8'></i><i class=g style='left:22px;top:1474px;width:1057.5px;height:2px;background:#c8c8c8'></i><i class=g style='left:22px;top:1530.8px;width:1057.5px;height:2px;background:#c8c8c8'></i><i class=g style='left:22px;top:1560px;width:1057.5px;height:2px;background:#c8c8c8'></i><i class=g style='left:22px;top:1614.5px;width:1057.5px;height:2px;background:#c8c8c8'></i><i class=g style='left:21px;top:1443.4px;width:2px;height:172.1px;background:#c8c8c8'></i><i class=g style='left:544.2px;top:1443.4px;width:2px;height:172.1px;background:#c8c8c8'></i><i class=g style='left:895px;top:1443.4px;width:2px;height:172.1px;background:#c8c8c8'></i><i class=g style='left:1078.5px;top:1443.4px;width:2px;height:172.1px;background:#c8c8c8'></i><span class=t style="left:27.63px;top:100px;font-size:25.581px;color:#363636;transform:scaleX(1.0333);">Reporting Period</span><span class=t style="left:26.95px;top:258px;font-size:25.581px;color:#363636;transform:scaleX(1.0550);">Submitted By</span><span class=t style="left:1082.72px;top:258px;font-size:25.581px;color:#363636;transform:scaleX(1.0762);">Submitted To</span><span class=t style="left:26.70px;top:417px;font-size:25.581px;color:#363636;transform:scaleX(1.0247);">Expense Details</span><span class=t style="left:29.60px;top:1186px;font-size:20.465px;color:#363636;transform:scaleX(1.2948);">Additional Notes - For Office Use Only</span><span class=t style="left:29.60px;top:1419px;font-size:23.535px;color:#363636;transform:scaleX(1.2174);">Approval</span><span class=t style="left:227.97px;top:134px;font-size:18.605px;color:#363636;transform:scaleX(1.0280);">Starting Date</span><span class=t style="left:669.68px;top:134px;font-size:18.605px;color:#363636;transform:scaleX(1.0198);">Ending Date</span><span class=t style="left:1356.65px;top:134px;font-size:18.605px;color:#363636;transform:scaleX(1.0044);">Purpose</span><span class=t style="left:247.00px;top:177px;font-size:19.186px;color:#363636;transform:scaleX(0.8851);">XX/XX/XX</span><span class=t style="left:682.75px;top:177px;font-size:19.186px;color:#363636;transform:scaleX(0.8793);">XX/XX/XX</span><span class=t style="left:1268.75px;top:177px;font-size:19.186px;color:#363636;transform:scaleX(1.0020);">Quarter 1 owner deliverables</span><span class=t style="left:43.75px;top:292px;font-size:18.605px;color:#363636;transform:scaleX(1.0521);">Name</span><span class=t style="left:305.10px;top:292px;font-size:18.605px;color:#363636;transform:scaleX(0.9412);">Title</span><span class=t style="left:565.16px;top:292px;font-size:18.605px;color:#363636;transform:scaleX(1.0396);">Department</span><span class=t style="left:731.46px;top:292px;font-size:18.605px;color:#363636;transform:scaleX(1.0365);">Phone</span><span class=t style="left:916.01px;top:292px;font-size:18.605px;color:#363636;transform:scaleX(0.9867);">Employee ID</span><span class=t style="left:1215.87px;top:292px;font-size:18.605px;color:#363636;transform:scaleX(1.0781);">Manager</span><span class=t style="left:1503.43px;top:292px;font-size:18.605px;color:#363636;transform:scaleX(1.0243);">Manager Title</span><span class=t style="left:1709.67px;top:292px;font-size:18.605px;color:#363636;transform:scaleX(1.0308);">Phone</span><span class=t style="left:44.80px;top:336px;font-size:19.186px;color:#363636;transform:scaleX(0.9947);">Jamal King</span><span class=t style="left:565.19px;top:336px;font-size:19.186px;color:#363636;transform:scaleX(1.0146);">Marketing</span><span class=t style="left:732.50px;top:336px;font-size:19.186px;color:#363636;transform:scaleX(0.8229);">XXX-XXX-XXXX</span><span class=t style="left:916.01px;top:336px;font-size:19.186px;color:#363636;transform:scaleX(0.9857);">8954</span><span class=t style="left:1098.35px;top:336px;font-size:19.186px;color:#363636;transform:scaleX(1.0477);">Sarah Goodwin</span><span class=t style="left:1507.78px;top:336px;font-size:19.186px;color:#363636;transform:scaleX(0.9716);">Sr. Associate</span><span class=t style="left:1710.70px;top:336px;font-size:19.186px;color:#363636;transform:scaleX(0.8279);">XXX-XXX-XXXX</span><span class=t style="left:133.01px;top:455px;font-size:17.006px;font-weight:bold;color:#ffffff;transform:scaleX(1.0917);">Date</span><span class=t style="left:451.97px;top:455px;font-size:17.006px;font-weight:bold;color:#ffffff;transform:scaleX(0.9815);">Description</span><span class=t style="left:769.17px;top:455px;font-size:17.006px;font-weight:bold;color:#ffffff;transform:scaleX(1.0323);">Lodging</span><span class=t style="left:962.34px;top:455px;font-size:17.006px;font-weight:bold;color:#ffffff;transform:scaleX(1.0587);">Meals</span><span class=t style="left:1164.95px;top:455px;font-size:17.006px;font-weight:bold;color:#ffffff;transform:scaleX(0.9662);">Supplies</span><span class=t style="left:1373.02px;top:455px;font-size:17.006px;font-weight:bold;color:#ffffff;transform:scaleX(1.0344);">Parking</span><span class=t style="left:1564.40px;top:455px;font-size:17.006px;font-weight:bold;color:#ffffff;transform:scaleX(0.9636);">Airfare</span><span class=t style="left:1730.15px;top:455px;font-size:17.006px;font-weight:bold;color:#ffffff;transform:scaleX(0.9941);">Transportation</span><span class=t style="left:1928.11px;top:455px;font-size:17.006px;font-weight:bold;color:#ffffff;transform:scaleX(1.0153);">Rental Vehicle</span><span class=t style="left:2153.02px;top:455px;font-size:17.006px;font-weight:bold;color:#ffffff;transform:scaleX(1.0153);">Mileage</span><span class=t style="left:2359.65px;top:455px;font-size:17.006px;font-weight:bold;color:#ffffff;transform:scaleX(1.0153);">Other</span><span class=t style="left:2532.77px;top:455px;font-size:17.006px;font-weight:bold;color:#ffffff;transform:scaleX(1.0153);">Daily Totals</span><span class=t style="left:2767.33px;top:455px;font-size:17.006px;font-weight:bold;color:#ffffff;transform:scaleX(1.0153);">Comments</span><span class=t style="left:43.38px;top:500px;font-size:20.058px;color:#505050;transform:scaleX(1.0241);">5/6/25</span><span class=t style="left:304.05px;top:500px;font-size:20.058px;color:#434343;transform:scaleX(0.9455);">Client lunch with Urban Pulse team</span><span class=t style="left:723.50px;top:501px;font-size:20.058px;font-weight:bold;color:#434343;transform:scaleX(0.8727);">$</span><span class=t style="left:857.88px;top:500px;font-size:20.058px;color:#434343;transform:scaleX(1.0200);">-</span><span class=t style="left:908.00px;top:501px;font-size:20.058px;font-weight:bold;color:#434343;transform:scaleX(0.8727);">$</span><span class=t style="left:1022.17px;top:500px;font-size:20.058px;color:#434343;transform:scaleX(0.9067);">58.40</span><span class=t style="left:1091.50px;top:501px;font-size:20.058px;font-weight:bold;color:#434343;transform:scaleX(0.8727);">$</span><span class=t style="left:1280.88px;top:500px;font-size:20.058px;color:#434343;transform:scaleX(1.0200);">-</span><span class=t style="left:1331.00px;top:501px;font-size:20.058px;font-weight:bold;color:#434343;transform:scaleX(0.8727);">$</span><span class=t style="left:1454.08px;top:500px;font-size:20.058px;color:#434343;transform:scaleX(1.0200);">-</span><span class=t style="left:1504.20px;top:501px;font-size:20.058px;font-weight:bold;color:#434343;transform:scaleX(0.8727);">$</span><span class=t style="left:1651.48px;top:500px;font-size:20.058px;color:#434343;transform:scaleX(1.0200);">-</span><span class=t style="left:1701.60px;top:501px;font-size:20.058px;font-weight:bold;color:#434343;transform:scaleX(0.8727);">$</span><span class=t style="left:1849.88px;top:500px;font-size:20.058px;color:#434343;transform:scaleX(1.0200);">-</span><span class=t style="left:1900.00px;top:501px;font-size:20.058px;font-weight:bold;color:#434343;transform:scaleX(0.8727);">$</span><span class=t style="left:2047.88px;top:500px;font-size:20.058px;color:#434343;transform:scaleX(1.0200);">-</span><span class=t style="left:2098.00px;top:501px;font-size:20.058px;font-weight:bold;color:#434343;transform:scaleX(0.8727);">$</span><span class=t style="left:2245.88px;top:500px;font-size:20.058px;color:#434343;transform:scaleX(1.0200);">-</span><span class=t style="left:2296.00px;top:501px;font-size:20.058px;font-weight:bold;color:#434343;transform:scaleX(0.8727);">$</span><span class=t style="left:2443.88px;top:500px;font-size:20.058px;color:#434343;transform:scaleX(1.0200);">-</span><span class=t style="left:2494.00px;top:501px;font-size:20.058px;font-weight:bold;color:#434343;transform:scaleX(0.8727);">$</span><span class=t style="left:2622.67px;top:500px;font-size:20.058px;color:#434343;transform:scaleX(0.9067);">58.40</span><span class=t style="left:43.38px;top:557px;font-size:20.058px;color:#505050;transform:scaleX(1.0185);">5/7/25</span><span class=t style="left:304.05px;top:557px;font-size:20.058px;color:#434343;transform:scaleX(0.9469);">Ride share to client presentation</span><span class=t style="left:723.50px;top:557px;font-size:20.058px;font-weight:bold;color:#434343;transform:scaleX(0.8727);">$</span><span class=t style="left:857.88px;top:556px;font-size:20.058px;color:#434343;transform:scaleX(1.0200);">-</span><span class=t style="left:908.00px;top:557px;font-size:20.058px;font-weight:bold;color:#434343;transform:scaleX(0.8727);">$</span><span class=t style="left:1041.38px;top:556px;font-size:20.058px;color:#434343;transform:scaleX(1.0200);">-</span><span class=t style="left:1091.50px;top:557px;font-size:20.058px;font-weight:bold;color:#434343;transform:scaleX(0.8727);">$</span><span class=t style="left:1280.88px;top:556px;font-size:20.058px;color:#434343;transform:scaleX(1.0200);">-</span><span class=t style="left:1331.00px;top:557px;font-size:20.058px;font-weight:bold;color:#434343;transform:scaleX(0.8727);">$</span><span class=t style="left:1454.08px;top:556px;font-size:20.058px;color:#434343;transform:scaleX(1.0200);">-</span><span class=t style="left:1504.20px;top:557px;font-size:20.058px;font-weight:bold;color:#434343;transform:scaleX(0.8727);">$</span><span class=t style="left:1651.48px;top:556px;font-size:20.058px;color:#434343;transform:scaleX(1.0200);">-</span><span class=t style="left:1701.60px;top:557px;font-size:20.058px;font-weight:bold;color:#434343;transform:scaleX(0.8727);">$</span><span class=t style="left:1830.67px;top:557px;font-size:20.058px;color:#434343;transform:scaleX(0.9067);">23.15</span><span class=t style="left:1900.00px;top:557px;font-size:20.058px;font-weight:bold;color:#434343;transform:scaleX(0.8727);">$</span><span class=t style="left:2047.88px;top:556px;font-size:20.058px;color:#434343;transform:scaleX(1.0200);">-</span><span class=t style="left:2098.00px;top:557px;font-size:20.058px;font-weight:bold;color:#434343;transform:scaleX(0.8727);">$</span><span class=t style="left:2245.88px;top:556px;font-size:20.058px;color:#434343;transform:scaleX(1.0200);">-</span><span class=t style="left:2296.00px;top:557px;font-size:20.058px;font-weight:bold;color:#434343;transform:scaleX(0.8727);">$</span><span class=t style="left:2443.88px;top:556px;font-size:20.058px;color:#434343;transform:scaleX(1.0200);">-</span><span class=t style="left:2494.00px;top:557px;font-size:20.058px;font-weight:bold;color:#434343;transform:scaleX(0.8727);">$</span><span class=t style="left:2641.88px;top:556px;font-size:20.058px;color:#434343;transform:scaleX(1.0200);">-</span><span class=t style="left:43.38px;top:613px;font-size:20.058px;color:#505050;transform:scaleX(1.0185);">5/8/25</span><span class=t style="left:304.02px;top:613px;font-size:20.058px;color:#434343;transform:scaleX(0.9764);">Poster printing for campaign pitch</span><span class=t style="left:723.50px;top:614px;font-size:20.058px;font-weight:bold;color:#434343;transform:scaleX(0.8727);">$</span><span class=t style="left:857.88px;top:612px;font-size:20.058px;color:#434343;transform:scaleX(1.0200);">-</span><span class=t style="left:908.00px;top:614px;font-size:20.058px;font-weight:bold;color:#434343;transform:scaleX(0.8727);">$</span><span class=t style="left:1041.38px;top:612px;font-size:20.058px;color:#434343;transform:scaleX(1.0200);">-</span><span class=t style="left:1091.50px;top:614px;font-size:20.058px;font-weight:bold;color:#434343;transform:scaleX(0.8727);">$</span><span class=t style="left:1261.67px;top:613px;font-size:20.058px;color:#434343;transform:scaleX(0.9067);">74.92</span><span class=t style="left:1331.00px;top:614px;font-size:20.058px;font-weight:bold;color:#434343;transform:scaleX(0.8727);">$</span><span class=t style="left:1454.08px;top:612px;font-size:20.058px;color:#434343;transform:scaleX(1.0200);">-</span><span class=t style="left:1504.20px;top:614px;font-size:20.058px;font-weight:bold;color:#434343;transform:scaleX(0.8727);">$</span><span class=t style="left:1651.48px;top:612px;font-size:20.058px;color:#434343;transform:scaleX(1.0200);">-</span><span class=t style="left:1701.60px;top:614px;font-size:20.058px;font-weight:bold;color:#434343;transform:scaleX(0.8727);">$</span><span class=t style="left:1849.88px;top:612px;font-size:20.058px;color:#434343;transform:scaleX(1.0200);">-</span><span class=t style="left:1900.00px;top:614px;font-size:20.058px;font-weight:bold;color:#434343;transform:scaleX(0.8727);">$</span><span class=t style="left:2047.88px;top:612px;font-size:20.058px;color:#434343;transform:scaleX(1.0200);">-</span><span class=t style="left:2098.00px;top:614px;font-size:20.058px;font-weight:bold;color:#434343;transform:scaleX(0.8727);">$</span><span class=t style="left:2245.88px;top:612px;font-size:20.058px;color:#434343;transform:scaleX(1.0200);">-</span><span class=t style="left:2296.00px;top:614px;font-size:20.058px;font-weight:bold;color:#434343;transform:scaleX(0.8727);">$</span><span class=t style="left:2443.88px;top:612px;font-size:20.058px;color:#434343;transform:scaleX(1.0200);">-</span><span class=t style="left:2494.00px;top:614px;font-size:20.058px;font-weight:bold;color:#434343;transform:scaleX(0.8727);">$</span><span class=t style="left:2622.67px;top:613px;font-size:20.058px;color:#434343;transform:scaleX(0.9067);">74.92</span><span class=t style="left:43.39px;top:669px;font-size:20.058px;color:#505050;transform:scaleX(1.0130);">5/9/25</span><span class=t style="left:304.05px;top:669px;font-size:20.058px;color:#434343;transform:scaleX(0.9526);">Hotel stay in Portland (1 night)</span><span class=t style="left:723.50px;top:670px;font-size:20.058px;font-weight:bold;color:#434343;transform:scaleX(0.8727);">$</span><span class=t style="left:828.69px;top:669px;font-size:20.058px;color:#434343;transform:scaleX(0.9067);">156.00</span><span class=t style="left:908.00px;top:670px;font-size:20.058px;font-weight:bold;color:#434343;transform:scaleX(0.8727);">$</span><span class=t style="left:1041.38px;top:669px;font-size:20.058px;color:#434343;transform:scaleX(1.0200);">-</span><span class=t style="left:1091.50px;top:670px;font-size:20.058px;font-weight:bold;color:#434343;transform:scaleX(0.8727);">$</span><span class=t style="left:1280.88px;top:669px;font-size:20.058px;color:#434343;transform:scaleX(1.0200);">-</span><span class=t style="left:1331.00px;top:670px;font-size:20.058px;font-weight:bold;color:#434343;transform:scaleX(0.8727);">$</span><span class=t style="left:1454.08px;top:669px;font-size:20.058px;color:#434343;transform:scaleX(1.0200);">-</span><span class=t style="left:1504.20px;top:670px;font-size:20.058px;font-weight:bold;color:#434343;transform:scaleX(0.8727);">$</span><span class=t style="left:1651.48px;top:669px;font-size:20.058px;color:#434343;transform:scaleX(1.0200);">-</span><span class=t style="left:1701.60px;top:670px;font-size:20.058px;font-weight:bold;color:#434343;transform:scaleX(0.8727);">$</span><span class=t style="left:1849.88px;top:669px;font-size:20.058px;color:#434343;transform:scaleX(1.0200);">-</span><span class=t style="left:1900.00px;top:670px;font-size:20.058px;font-weight:bold;color:#434343;transform:scaleX(0.8727);">$</span><span class=t style="left:2047.88px;top:669px;font-size:20.058px;color:#434343;transform:scaleX(1.0200);">-</span><span class=t style="left:2098.00px;top:670px;font-size:20.058px;font-weight:bold;color:#434343;transform:scaleX(0.8727);">$</span><span class=t style="left:2245.88px;top:669px;font-size:20.058px;color:#434343;transform:scaleX(1.0200);">-</span><span class=t style="left:2296.00px;top:670px;font-size:20.058px;font-weight:bold;color:#434343;transform:scaleX(0.8727);">$</span><span class=t style="left:2443.88px;top:669px;font-size:20.058px;color:#434343;transform:scaleX(1.0200);">-</span><span class=t style="left:2494.00px;top:670px;font-size:20.058px;font-weight:bold;color:#434343;transform:scaleX(0.8727);">$</span><span class=t style="left:2612.69px;top:669px;font-size:20.058px;color:#434343;transform:scaleX(0.9067);">156.00</span><span class=t style="left:43.39px;top:726px;font-size:20.058px;color:#505050;transform:scaleX(1.0123);">5/10/25</span><span class=t style="left:305.00px;top:726px;font-size:20.058px;color:#434343;transform:scaleX(0.9113);">42 miles @ $0.655/mile to site visit</span><span class=t style="left:723.50px;top:726px;font-size:20.058px;font-weight:bold;color:#434343;transform:scaleX(0.8727);">$</span><span class=t style="left:857.88px;top:725px;font-size:20.058px;color:#434343;transform:scaleX(1.0200);">-</span><span class=t style="left:908.00px;top:726px;font-size:20.058px;font-weight:bold;color:#434343;transform:scaleX(0.8727);">$</span><span class=t style="left:1041.38px;top:725px;font-size:20.058px;color:#434343;transform:scaleX(1.0200);">-</span><span class=t style="left:1091.50px;top:726px;font-size:20.058px;font-weight:bold;color:#434343;transform:scaleX(0.8727);">$</span><span class=t style="left:1280.88px;top:725px;font-size:20.058px;color:#434343;transform:scaleX(1.0200);">-</span><span class=t style="left:1331.00px;top:726px;font-size:20.058px;font-weight:bold;color:#434343;transform:scaleX(0.8727);">$</span><span class=t style="left:1454.08px;top:725px;font-size:20.058px;color:#434343;transform:scaleX(1.0200);">-</span><span class=t style="left:1504.20px;top:726px;font-size:20.058px;font-weight:bold;color:#434343;transform:scaleX(0.8727);">$</span><span class=t style="left:1651.48px;top:725px;font-size:20.058px;color:#434343;transform:scaleX(1.0200);">-</span><span class=t style="left:1701.60px;top:726px;font-size:20.058px;font-weight:bold;color:#434343;transform:scaleX(0.8727);">$</span><span class=t style="left:1849.88px;top:725px;font-size:20.058px;color:#434343;transform:scaleX(1.0200);">-</span><span class=t style="left:1900.00px;top:726px;font-size:20.058px;font-weight:bold;color:#434343;transform:scaleX(0.8727);">$</span><span class=t style="left:2047.88px;top:725px;font-size:20.058px;color:#434343;transform:scaleX(1.0200);">-</span><span class=t style="left:2098.00px;top:726px;font-size:20.058px;font-weight:bold;color:#434343;transform:scaleX(0.8727);">$</span><span class=t style="left:2226.67px;top:726px;font-size:20.058px;color:#434343;transform:scaleX(0.9067);">27.51</span><span class=t style="left:2296.00px;top:726px;font-size:20.058px;font-weight:bold;color:#434343;transform:scaleX(0.8727);">$</span><span class=t style="left:2443.88px;top:725px;font-size:20.058px;color:#434343;transform:scaleX(1.0200);">-</span><span class=t style="left:2494.00px;top:726px;font-size:20.058px;font-weight:bold;color:#434343;transform:scaleX(0.8727);">$</span><span class=t style="left:2622.67px;top:726px;font-size:20.058px;color:#434343;transform:scaleX(0.9067);">27.51</span><span class=t style="left:723.50px;top:782px;font-size:20.058px;font-weight:bold;color:#434343;transform:scaleX(0.8727);">$</span><span class=t style="left:857.88px;top:781px;font-size:20.058px;color:#434343;transform:scaleX(1.0200);">-</span><span class=t style="left:908.00px;top:782px;font-size:20.058px;font-weight:bold;color:#434343;transform:scaleX(0.8727);">$</span><span class=t style="left:1041.38px;top:781px;font-size:20.058px;color:#434343;transform:scaleX(1.0200);">-</span><span class=t style="left:1091.50px;top:782px;font-size:20.058px;font-weight:bold;color:#434343;transform:scaleX(0.8727);">$</span><span class=t style="left:1280.88px;top:781px;font-size:20.058px;color:#434343;transform:scaleX(1.0200);">-</span><span class=t style="left:1331.00px;top:782px;font-size:20.058px;font-weight:bold;color:#434343;transform:scaleX(0.8727);">$</span><span class=t style="left:1454.08px;top:781px;font-size:20.058px;color:#434343;transform:scaleX(1.0200);">-</span><span class=t style="left:1504.20px;top:782px;font-size:20.058px;font-weight:bold;color:#434343;transform:scaleX(0.8727);">$</span><span class=t style="left:1651.48px;top:781px;font-size:20.058px;color:#434343;transform:scaleX(1.0200);">-</span><span class=t style="left:1701.60px;top:782px;font-size:20.058px;font-weight:bold;color:#434343;transform:scaleX(0.8727);">$</span><span class=t style="left:1849.88px;top:781px;font-size:20.058px;color:#434343;transform:scaleX(1.0200);">-</span><span class=t style="left:1900.00px;top:782px;font-size:20.058px;font-weight:bold;color:#434343;transform:scaleX(0.8727);">$</span><span class=t style="left:2047.88px;top:781px;font-size:20.058px;color:#434343;transform:scaleX(1.0200);">-</span><span class=t style="left:2098.00px;top:782px;font-size:20.058px;font-weight:bold;color:#434343;transform:scaleX(0.8727);">$</span><span class=t style="left:2245.88px;top:781px;font-size:20.058px;color:#434343;transform:scaleX(1.0200);">-</span><span class=t style="left:2296.00px;top:782px;font-size:20.058px;font-weight:bold;color:#434343;transform:scaleX(0.8727);">$</span><span class=t style="left:2443.88px;top:781px;font-size:20.058px;color:#434343;transform:scaleX(1.0200);">-</span><span class=t style="left:2494.00px;top:782px;font-size:20.058px;font-weight:bold;color:#434343;transform:scaleX(0.8727);">$</span><span class=t style="left:2641.88px;top:781px;font-size:20.058px;color:#434343;transform:scaleX(1.0200);">-</span><span class=t style="left:723.50px;top:839px;font-size:20.058px;font-weight:bold;color:#434343;transform:scaleX(0.8727);">$</span><span class=t style="left:857.88px;top:838px;font-size:20.058px;color:#434343;transform:scaleX(1.0200);">-</span><span class=t style="left:908.00px;top:839px;font-size:20.058px;font-weight:bold;color:#434343;transform:scaleX(0.8727);">$</span><span class=t style="left:1041.38px;top:838px;font-size:20.058px;color:#434343;transform:scaleX(1.0200);">-</span><span class=t style="left:1091.50px;top:839px;font-size:20.058px;font-weight:bold;color:#434343;transform:scaleX(0.8727);">$</span><span class=t style="left:1280.88px;top:838px;font-size:20.058px;color:#434343;transform:scaleX(1.0200);">-</span><span class=t style="left:1331.00px;top:839px;font-size:20.058px;font-weight:bold;color:#434343;transform:scaleX(0.8727);">$</span><span class=t style="left:1454.08px;top:838px;font-size:20.058px;color:#434343;transform:scaleX(1.0200);">-</span><span class=t style="left:1504.20px;top:839px;font-size:20.058px;font-weight:bold;color:#434343;transform:scaleX(0.8727);">$</span><span class=t style="left:1651.48px;top:838px;font-size:20.058px;color:#434343;transform:scaleX(1.0200);">-</span><span class=t style="left:1701.60px;top:839px;font-size:20.058px;font-weight:bold;color:#434343;transform:scaleX(0.8727);">$</span><span class=t style="left:1849.88px;top:838px;font-size:20.058px;color:#434343;transform:scaleX(1.0200);">-</span><span class=t style="left:1900.00px;top:839px;font-size:20.058px;font-weight:bold;color:#434343;transform:scaleX(0.8727);">$</span><span class=t style="left:2047.88px;top:838px;font-size:20.058px;color:#434343;transform:scaleX(1.0200);">-</span><span class=t style="left:2098.00px;top:839px;font-size:20.058px;font-weight:bold;color:#434343;transform:scaleX(0.8727);">$</span><span class=t style="left:2245.88px;top:838px;font-size:20.058px;color:#434343;transform:scaleX(1.0200);">-</span><span class=t style="left:2296.00px;top:839px;font-size:20.058px;font-weight:bold;color:#434343;transform:scaleX(0.8727);">$</span><span class=t style="left:2443.88px;top:838px;font-size:20.058px;color:#434343;transform:scaleX(1.0200);">-</span><span class=t style="left:2494.00px;top:839px;font-size:20.058px;font-weight:bold;color:#434343;transform:scaleX(0.8727);">$</span><span class=t style="left:2641.88px;top:838px;font-size:20.058px;color:#434343;transform:scaleX(1.0200);">-</span><span class=t style="left:558.50px;top:896px;font-size:18.605px;font-weight:bold;color:#1e1e1e;transform:scaleX(0.9568);">Category Totals</span><span class=t style="left:723.50px;top:895px;font-size:20.058px;font-weight:bold;color:#434343;transform:scaleX(0.8727);">$</span><span class=t style="left:828.69px;top:894px;font-size:20.058px;color:#434343;transform:scaleX(0.9067);">156.00</span><span class=t style="left:908.00px;top:895px;font-size:20.058px;font-weight:bold;color:#434343;transform:scaleX(0.8727);">$</span><span class=t style="left:1022.17px;top:894px;font-size:20.058px;color:#434343;transform:scaleX(0.9067);">58.40</span><span class=t style="left:1091.50px;top:895px;font-size:20.058px;font-weight:bold;color:#434343;transform:scaleX(0.8727);">$</span><span class=t style="left:1261.67px;top:894px;font-size:20.058px;color:#434343;transform:scaleX(0.9067);">74.92</span><span class=t style="left:1331.00px;top:895px;font-size:20.058px;font-weight:bold;color:#434343;transform:scaleX(0.8727);">$</span><span class=t style="left:1454.08px;top:894px;font-size:20.058px;color:#434343;transform:scaleX(1.0200);">-</span><span class=t style="left:1504.20px;top:895px;font-size:20.058px;font-weight:bold;color:#434343;transform:scaleX(0.8727);">$</span><span class=t style="left:1651.48px;top:894px;font-size:20.058px;color:#434343;transform:scaleX(1.0200);">-</span><span class=t style="left:1701.60px;top:895px;font-size:20.058px;font-weight:bold;color:#434343;transform:scaleX(0.8727);">$</span><span class=t style="left:1830.67px;top:894px;font-size:20.058px;color:#434343;transform:scaleX(0.9067);">23.15</span><span class=t style="left:1900.00px;top:895px;font-size:20.058px;font-weight:bold;color:#434343;transform:scaleX(0.8727);">$</span><span class=t style="left:2047.88px;top:894px;font-size:20.058px;color:#434343;transform:scaleX(1.0200);">-</span><span class=t style="left:2098.00px;top:895px;font-size:20.058px;font-weight:bold;color:#434343;transform:scaleX(0.8727);">$</span><span class=t style="left:2226.67px;top:894px;font-size:20.058px;color:#434343;transform:scaleX(0.9067);">27.51</span><span class=t style="left:2296.00px;top:895px;font-size:20.058px;font-weight:bold;color:#434343;transform:scaleX(0.8727);">$</span><span class=t style="left:2443.88px;top:894px;font-size:20.058px;color:#434343;transform:scaleX(1.0200);">-</span><span class=t style="left:2384.70px;top:954px;font-size:15.262px;font-weight:bold;color:#1e1e1e;transform:scaleX(0.9427);">SUBTOTAL</span><span class=t style="left:2494.00px;top:952px;font-size:20.058px;font-weight:bold;color:#1e1e1e;transform:scaleX(0.8727);">$</span><span class=t style="left:2612.69px;top:952px;font-size:20.058px;font-weight:bold;color:#1e1e1e;transform:scaleX(0.9067);">316.83</span><span class=t style="left:2370.00px;top:1011px;font-size:15.262px;font-weight:bold;color:#1e1e1e;transform:scaleX(1.0952);">ADVANCES</span><span class=t style="left:2494.00px;top:1008px;font-size:20.058px;font-weight:bold;color:#1e1e1e;transform:scaleX(0.8727);">$</span><span class=t style="left:2612.69px;top:1008px;font-size:20.058px;font-weight:bold;color:#1e1e1e;transform:scaleX(0.9067);">200.00</span><span class=t style="left:2127.00px;top:1067px;font-size:15.262px;font-weight:bold;color:#1e1e1e;transform:scaleX(0.9882);">TOTAL TRAVEL EXPENSES REIMBURSEMENT</span><span class=t style="left:2494.00px;top:1065px;font-size:20.058px;font-weight:bold;color:#1e1e1e;transform:scaleX(0.8727);">$</span><span class=t style="left:2613.60px;top:1064px;font-size:20.058px;font-weight:bold;color:#1e1e1e;transform:scaleX(0.9067);">116.83</span><span class=t style="left:123.50px;top:1004px;font-size:25.581px;font-weight:bold;color:#8a6f22;transform:scaleX(0.8839);">*DON'T FORGET TO ATTACH ALL RECEIPTS*</span><span class=t style="left:224.10px;top:1450px;font-size:18.605px;color:#363636;transform:scaleX(1.0153);">Requested By</span><span class=t style="left:679.99px;top:1450px;font-size:18.605px;color:#363636;transform:scaleX(1.0153);">Signature</span><span class=t style="left:967.39px;top:1450px;font-size:18.605px;color:#363636;transform:scaleX(1.0153);">Date</span><span class=t style="left:43.78px;top:1495px;font-size:19.186px;color:#363636;transform:scaleX(1.0153);">Bert D.</span><span class=t style="left:953.18px;top:1495px;font-size:19.186px;color:#363636;transform:scaleX(1.0153);">xx/xx/xx</span><span class=t style="left:229.68px;top:1539px;font-size:18.605px;color:#363636;transform:scaleX(1.0153);">Approved By</span><span class=t style="left:679.99px;top:1539px;font-size:18.605px;color:#363636;transform:scaleX(1.0153);">Signature</span><span class=t style="left:967.39px;top:1539px;font-size:18.605px;color:#363636;transform:scaleX(1.0153);">Date</span><span class=t style="left:43.78px;top:1581px;font-size:19.186px;color:#363636;transform:scaleX(1.0153);">Nora W.</span><span class=t style="left:953.18px;top:1581px;font-size:19.186px;color:#363636;transform:scaleX(1.0153);">xx/xx/xx</span><svg style='position:absolute;left:0;top:0' width='2950' height='1200'><line x1='22' y1='1137.8' x2='2944' y2='1137.8' stroke='#8a6f22' stroke-width='3.6' stroke-dasharray='16 5' stroke-dashoffset='8'/></svg></div></div>
</body></html>
